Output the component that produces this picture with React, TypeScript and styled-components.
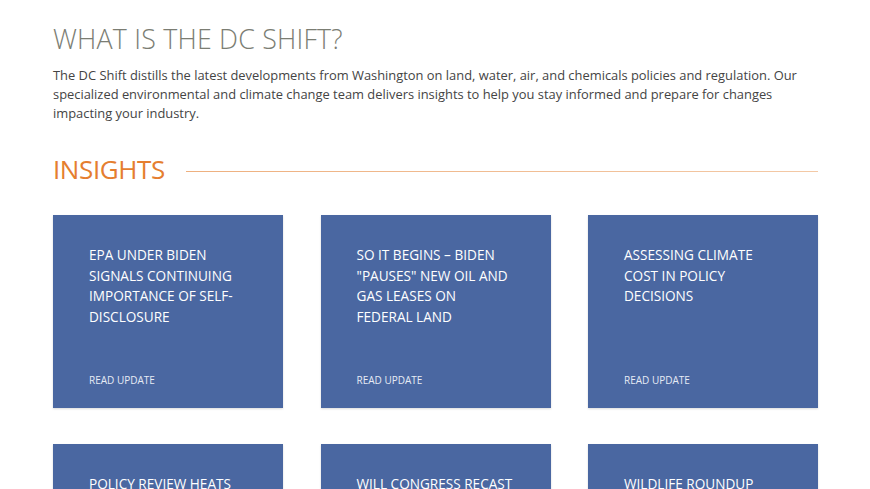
import styled, { createGlobalStyle } from 'styled-components'

const GlobalStyle = createGlobalStyle`
	body {
		margin: 0;
		background: #ffffff;
		font-family: 'Open Sans', 'Liberation Sans', sans-serif;
	}
`

const Page = styled.div`
	width: 765px;
	padding: 22px 0 0 53px;
`

const Title = styled.h1`
	margin: 0;
	font-size: 26.8px;
	font-weight: 300;
	line-height: 34px;
	color: #7b7d73;
	letter-spacing: 0.2px;
`

const Intro = styled.p`
	margin: 10px 0 0;
	font-size: 12.9px;
	line-height: 19px;
	color: #444444;
`

const SectionHeader = styled.div`
	display: flex;
	align-items: center;
	gap: 21px;
	margin-top: 29px;
`

const SectionTitle = styled.h2`
	margin: 0;
	font-size: 26px;
	font-weight: 400;
	line-height: 34px;
	color: #e57e2f;
	letter-spacing: -0.4px;
`

const Rule = styled.div`
	flex: 1;
	height: 1px;
	margin-top: 4px;
	background: linear-gradient(90deg, #eeb07f, #f3c9a6);
`

const Grid = styled.div`
	display: grid;
	grid-template-columns: repeat(3, 230px);
	column-gap: 37.5px;
	row-gap: 36px;
	margin-top: 29px;
`

const Card = styled.a`
	display: flex;
	flex-direction: column;
	justify-content: space-between;
	height: 193px;
	box-sizing: border-box;
	padding: 30px 37px 21px 36px;
	background: #4a67a1;
	color: #ffffff;
	text-decoration: none;
	box-shadow: 0 1px 2px rgba(0, 0, 0, 0.15);
`

const CardTitle = styled.div`
	font-size: 13.6px;
	line-height: 20.5px;
	text-transform: uppercase;
`

const CardLink = styled.div`
	font-size: 10px;
	line-height: 14px;
	color: #e6ebf5;
`

const insights = [
	'EPA Under Biden Signals Continuing Importance of Self-Disclosure',
	'So It Begins – Biden "Pauses" New Oil and Gas Leases on Federal Land',
	'Assessing Climate Cost in Policy Decisions',
	'Policy Review Heats Up',
	'Will Congress Recast the Rules',
	'Wildlife Roundup',
]

export default function App() {
	return (
		<>
			<GlobalStyle />
			<Page>
				<Title>WHAT IS THE DC SHIFT?</Title>
				<Intro>
					The DC Shift distills the latest developments from Washington on land, water, air, and
					chemicals policies and regulation. Our specialized environmental and climate change team
					delivers insights to help you stay informed and prepare for changes impacting your
					industry.
				</Intro>
				<SectionHeader>
					<SectionTitle>INSIGHTS</SectionTitle>
					<Rule />
				</SectionHeader>
				<Grid>
					{insights.map((title) => (
						<Card key={title} href='#'>
							<CardTitle>{title}</CardTitle>
							<CardLink>READ UPDATE</CardLink>
						</Card>
					))}
				</Grid>
			</Page>
		</>
	)
}
